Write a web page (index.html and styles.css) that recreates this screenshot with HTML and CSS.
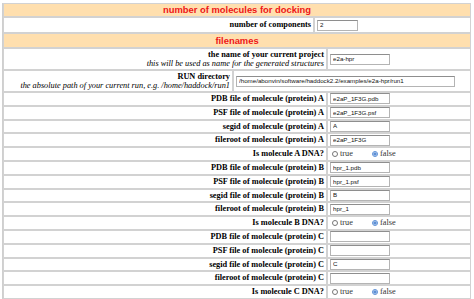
FILE: index.html
```html
<!DOCTYPE html>
<html lang="en">
<head>
    <meta charset="UTF-8">
    <title>HADDOCK parameters</title>
    <link rel="stylesheet" href="styles.css">
</head>
<body>
    <div class="form">
        <div class="head">number of molecules for docking</div>
        <div class="row narrow">
            <div class="label"><b>number of components</b></div>
            <div class="field"><input class="small" type="text" value="2"></div>
        </div>

        <div class="head h2">filenames</div>
        <div class="row double">
            <div class="label">
                <b>the name of your current project</b><br>
                <i>this will be used as name for the generated structures</i>
            </div>
            <div class="field"><input type="text" value="e2a-hpr"></div>
        </div>
        <div class="row wide double">
            <div class="label">
                <b>RUN directory</b><br>
                <i>the absolute path of your current run, e.g. /home/haddock/run1</i>
            </div>
            <div class="field"><input class="long" type="text" value="/home/abonvin/software/haddock2.2/examples/e2a-hpr/run1"></div>
        </div>

        <div class="row"><div class="label"><b>PDB file of molecule (protein) A</b></div><div class="field"><input type="text" value="e2aP_1F3G.pdb"></div></div>
        <div class="row"><div class="label"><b>PSF file of molecule (protein) A</b></div><div class="field"><input type="text" value="e2aP_1F3G.psf"></div></div>
        <div class="row"><div class="label"><b>segid of molecule (protein) A</b></div><div class="field"><input type="text" value="A"></div></div>
        <div class="row"><div class="label"><b>fileroot of molecule (protein) A</b></div><div class="field"><input type="text" value="e2aP_1F3G"></div></div>
        <div class="row"><div class="label"><b>Is molecule A DNA?</b></div>
            <div class="field radios">
                <label><input type="radio" name="dnaA"> true</label>
                <label><input type="radio" name="dnaA" checked> false</label>
            </div>
        </div>

        <div class="row"><div class="label"><b>PDB file of molecule (protein) B</b></div><div class="field"><input type="text" value="hpr_1.pdb"></div></div>
        <div class="row"><div class="label"><b>PSF file of molecule (protein) B</b></div><div class="field"><input type="text" value="hpr_1.psf"></div></div>
        <div class="row"><div class="label"><b>segid file of molecule (protein) B</b></div><div class="field"><input type="text" value="B"></div></div>
        <div class="row"><div class="label"><b>fileroot of molecule (protein) B</b></div><div class="field"><input type="text" value="hpr_1"></div></div>
        <div class="row"><div class="label"><b>Is molecule B DNA?</b></div>
            <div class="field radios">
                <label><input type="radio" name="dnaB"> true</label>
                <label><input type="radio" name="dnaB" checked> false</label>
            </div>
        </div>

        <div class="row"><div class="label"><b>PDB file of molecule (protein) C</b></div><div class="field"><input type="text" value=""></div></div>
        <div class="row"><div class="label"><b>PSF file of molecule (protein) C</b></div><div class="field"><input type="text" value=""></div></div>
        <div class="row"><div class="label"><b>segid file of molecule (protein) C</b></div><div class="field"><input type="text" value="C"></div></div>
        <div class="row"><div class="label"><b>fileroot of molecule (protein) C</b></div><div class="field"><input type="text" value=""></div></div>
        <div class="row"><div class="label"><b>Is molecule C DNA?</b></div>
            <div class="field radios">
                <label><input type="radio" name="dnaC"> true</label>
                <label><input type="radio" name="dnaC" checked> false</label>
            </div>
        </div>
    </div>
</body>
</html>
```

FILE: styles.css
```css
body {
    margin: 0;
    background: #fff;
    font-family: 'Liberation Serif', 'Times New Roman', serif;
    color: #000;
}
.form {
    margin: 3px 3px 0 2px;
    border-left: 1px solid #cfcfcf;
}
.head {
    background: #ffdfae;
    border: 1px solid #d2d2d2;
    color: #ee1515;
    font-family: 'Liberation Sans', Arial, sans-serif;
    font-weight: bold;
    font-size: 9.4px;
    line-height: 12px;
    text-align: center;
}
.head.h2 {
    line-height: 13px;
}
.row {
    display: grid;
    grid-template-columns: 324px 1fr;
    font-size: 8.3px;
    line-height: 11.8px;
}
.row.narrow {
    grid-template-columns: 311px 1fr;
    line-height: 14px;
}
.row.wide {
    grid-template-columns: 230px 1fr;
}
.row.double {
    line-height: 9px;
}
.row.double .label {
    padding-top: 1px;
    padding-bottom: 1px;
}
.label {
    border: 1px solid #d2d2d2;
    text-align: right;
    padding: 0 2px 0 0;
}
.field {
    border: 1px solid #d2d2d2;
    display: flex;
    align-items: center;
    padding-left: 2px;
}
input[type=text] {
    width: 60px;
    height: 11px;
    box-sizing: border-box;
    border: 1px solid #b4b4b4;
    border-top-color: #8e8e8e;
    padding: 0 2px 1px;
    margin: 0;
    font-family: 'Liberation Sans', Arial, sans-serif;
    font-size: 6.2px;
    color: #111;
    outline: none;
}
input.small {
    width: 41px;
}
input.long {
    width: 219px;
}
.radios label {
    display: flex;
    align-items: center;
    gap: 2px;
    width: 40px;
    color: #333;
}
input[type=radio] {
    width: 6px;
    height: 6px;
    margin: 0 0 0 2px;
    accent-color: #5b8fd6;
}
```
